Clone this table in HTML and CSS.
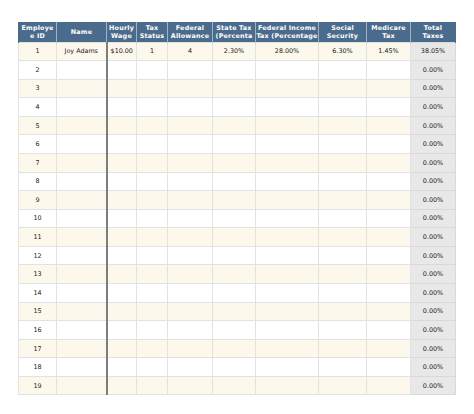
FILE: index.html
```html
<!DOCTYPE html>
<html>
<head>
<meta charset="utf-8">
<link rel="stylesheet" href="styles.css">
</head>
<body>
<table class="sheet">
<colgroup>
<col class="c1"><col class="c2"><col class="c3"><col class="c4"><col class="c5"><col class="c6"><col class="c7"><col class="c8"><col class="c9"><col class="c10">
</colgroup>
<thead>
<tr>
<th>Employe<br>e ID</th>
<th>Name</th>
<th>Hourly<br>Wage</th>
<th>Tax<br>Status</th>
<th>Federal<br>Allowance</th>
<th>State Tax<br>(Percenta</th>
<th>Federal Income<br>Tax (Percentage</th>
<th>Social<br>Security</th>
<th>Medicare<br>Tax</th>
<th>Total<br>Taxes</th>
</tr>
</thead>
<tbody>
<tr class="odd"><td>1</td><td>Joy Adams</td><td class="wage">$10.00</td><td>1</td><td>4</td><td>2.30%</td><td>28.00%</td><td>6.30%</td><td>1.45%</td><td class="tot">38.05%</td></tr>
<tr><td>2</td><td></td><td class="wage"></td><td></td><td></td><td></td><td></td><td></td><td></td><td class="tot">0.00%</td></tr>
<tr class="odd"><td>3</td><td></td><td class="wage"></td><td></td><td></td><td></td><td></td><td></td><td></td><td class="tot">0.00%</td></tr>
<tr><td>4</td><td></td><td class="wage"></td><td></td><td></td><td></td><td></td><td></td><td></td><td class="tot">0.00%</td></tr>
<tr class="odd"><td>5</td><td></td><td class="wage"></td><td></td><td></td><td></td><td></td><td></td><td></td><td class="tot">0.00%</td></tr>
<tr><td>6</td><td></td><td class="wage"></td><td></td><td></td><td></td><td></td><td></td><td></td><td class="tot">0.00%</td></tr>
<tr class="odd"><td>7</td><td></td><td class="wage"></td><td></td><td></td><td></td><td></td><td></td><td></td><td class="tot">0.00%</td></tr>
<tr><td>8</td><td></td><td class="wage"></td><td></td><td></td><td></td><td></td><td></td><td></td><td class="tot">0.00%</td></tr>
<tr class="odd"><td>9</td><td></td><td class="wage"></td><td></td><td></td><td></td><td></td><td></td><td></td><td class="tot">0.00%</td></tr>
<tr><td>10</td><td></td><td class="wage"></td><td></td><td></td><td></td><td></td><td></td><td></td><td class="tot">0.00%</td></tr>
<tr class="odd"><td>11</td><td></td><td class="wage"></td><td></td><td></td><td></td><td></td><td></td><td></td><td class="tot">0.00%</td></tr>
<tr><td>12</td><td></td><td class="wage"></td><td></td><td></td><td></td><td></td><td></td><td></td><td class="tot">0.00%</td></tr>
<tr class="odd"><td>13</td><td></td><td class="wage"></td><td></td><td></td><td></td><td></td><td></td><td></td><td class="tot">0.00%</td></tr>
<tr><td>14</td><td></td><td class="wage"></td><td></td><td></td><td></td><td></td><td></td><td></td><td class="tot">0.00%</td></tr>
<tr class="odd"><td>15</td><td></td><td class="wage"></td><td></td><td></td><td></td><td></td><td></td><td></td><td class="tot">0.00%</td></tr>
<tr><td>16</td><td></td><td class="wage"></td><td></td><td></td><td></td><td></td><td></td><td></td><td class="tot">0.00%</td></tr>
<tr class="odd"><td>17</td><td></td><td class="wage"></td><td></td><td></td><td></td><td></td><td></td><td></td><td class="tot">0.00%</td></tr>
<tr><td>18</td><td></td><td class="wage"></td><td></td><td></td><td></td><td></td><td></td><td></td><td class="tot">0.00%</td></tr>
<tr class="odd"><td>19</td><td></td><td class="wage"></td><td></td><td></td><td></td><td></td><td></td><td></td><td class="tot">0.00%</td></tr>
</tbody>
</table>
</body>
</html>
```
FILE: styles.css
```css
html, body {
  margin: 0;
  padding: 0;
  background: #ffffff;
}
body {
  padding: 22px 0 0 18px;
  font-family: "DejaVu Sans", "Liberation Sans", sans-serif;
}
.sheet {
  border-collapse: collapse;
  table-layout: fixed;
  width: 437px;
}
.c1 { width: 38px; }
.c2 { width: 50px; }
.c3 { width: 30px; }
.c4 { width: 31px; }
.c5 { width: 45px; }
.c6 { width: 43px; }
.c7 { width: 63px; }
.c8 { width: 48px; }
.c9 { width: 44px; }
.c10 { width: 45px; }
.sheet th {
  height: 19.5px;
  padding: 0;
  background: #4b6b8c;
  color: #ffffff;
  font-size: 6.4px;
  font-weight: bold;
  line-height: 8px;
  letter-spacing: 0.2px;
  white-space: nowrap;
  overflow: hidden;
  text-align: center;
  vertical-align: middle;
  border-left: 1px solid #9fb3c6;
  border-right: 1px solid #9fb3c6;
}
.sheet th:first-child { border-left: 1px solid #4b6b8c; }
.sheet th:last-child { border-right: 1px solid #4b6b8c; }
.sheet td {
  height: 17.58px;
  padding: 0;
  font-size: 6.4px;
  line-height: 8px;
  color: #1a1a1a;
  text-align: center;
  vertical-align: middle;
  white-space: nowrap;
  overflow: hidden;
  border: 1px solid #e2e2e2;
  background: #ffffff;
}
.sheet tr.odd td { background: #fcf8ec; }
.sheet td.wage { border-left: 2px solid #7d7d7d; }
.sheet td.tot, .sheet tr.odd td.tot {
  background: #e8e8e8;
  border-color: #d9d9d9;
}
```
